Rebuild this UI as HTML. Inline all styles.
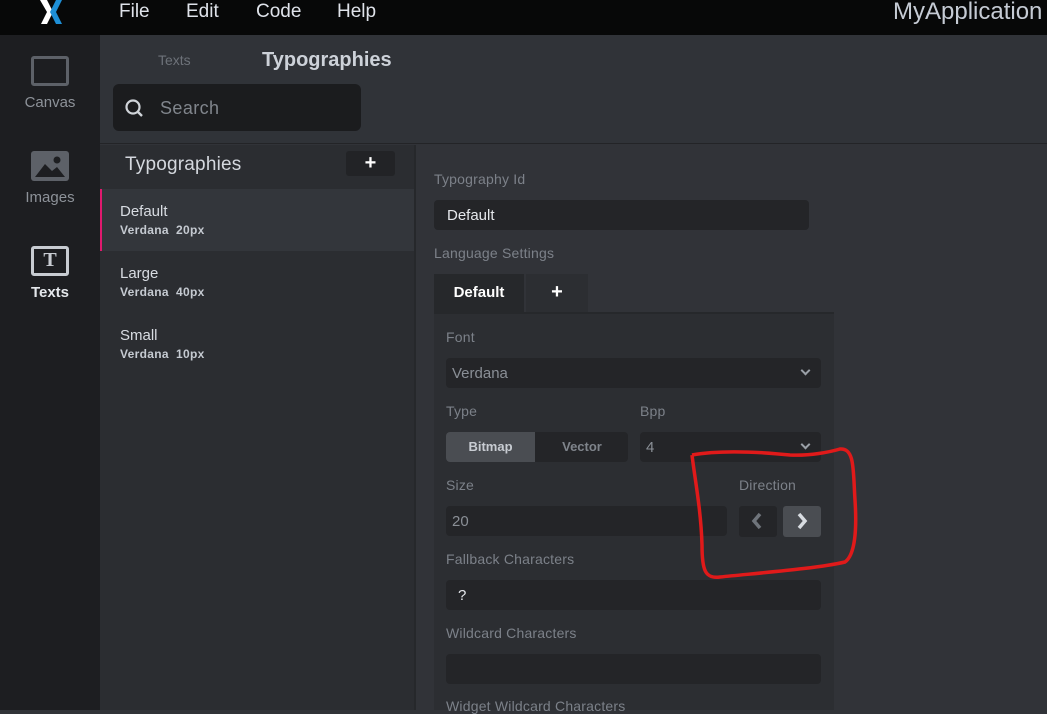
<!DOCTYPE html>
<html><head><meta charset="utf-8"><style>
*{margin:0;padding:0;box-sizing:border-box}
body{width:1047px;height:710px;overflow:hidden;background:#313338;font-family:"Liberation Sans",sans-serif;position:relative;color:#e6e8ec}
.a{position:absolute}
.top{left:0;top:0;width:1047px;height:35px;background:#070808}
.menu{top:1px;font-size:19px;color:#dfe3ea}
.side{left:0;top:35px;width:100px;height:675px;background:#1d1e21}
.slab{width:100px;text-align:center;font-size:15px;color:#8d9299}
.lbl{font-size:14px;color:#7c8189;letter-spacing:.2px}
.inp{background:#242528;border-radius:4px;font-size:15px;color:#8a8f96;padding-left:6px;line-height:31px;height:30px}
.chev{position:absolute;right:12px;top:9px;width:7px;height:7px;border-right:2px solid #9aa0a7;border-bottom:2px solid #9aa0a7;transform:rotate(45deg)}
.sub{font-size:12px;font-weight:bold;color:#c5cad1;letter-spacing:.3px}
</style></head><body>
<div class="a top"></div>
<svg class="a" style="left:40px;top:0" width="24" height="24" viewBox="0 0 24 24"><path d="M0 0 L7 0 L13 12 L7 24 L1 24 L7 12Z" fill="#fff"/><path d="M22 0 L16 0 L10 12 L16 24 L22 24 L16 12Z" fill="#1e8fd6"/></svg>
<div class="a menu" style="left:119px">File</div>
<div class="a menu" style="left:186px">Edit</div>
<div class="a menu" style="left:256px">Code</div>
<div class="a menu" style="left:337px">Help</div>
<div class="a" style="left:893px;top:-2px;font-size:24px;color:#c5cbd4;white-space:nowrap">MyApplication</div>
<div class="a side"></div>
<div class="a" style="left:31px;top:56px;width:38px;height:30px;border:3px solid #5d6168;border-radius:3px"></div>
<div class="a slab" style="top:94px">Canvas</div>
<svg class="a" style="left:31px;top:151px" width="38" height="30"><rect width="38" height="30" rx="3" fill="#5d6168"/><path d="M4 26 L14 13 L21 20 L26 16 L34 26Z" fill="#1d1e21"/><circle cx="26" cy="9" r="3.5" fill="#1d1e21"/></svg>
<div class="a slab" style="top:189px">Images</div>
<div class="a" style="left:31px;top:246px;width:38px;height:30px;border:3px solid #c8ccd2;border-radius:3px;text-align:center;font:bold 20px 'Liberation Serif',serif;color:#c8ccd2;line-height:23px">T</div>
<div class="a slab" style="top:284px;color:#e4e7eb;font-weight:bold">Texts</div>
<div class="a" style="left:100px;top:35px;width:947px;height:109px;background:#303338;border-bottom:1px solid #232427"></div>
<div class="a" style="left:158px;top:52px;font-size:14px;color:#6d7279">Texts</div>
<div class="a" style="left:262px;top:49px;font-size:20px;font-weight:bold;color:#cdd2d9">Typographies</div>
<div class="a" style="left:113px;top:84px;width:248px;height:47px;background:#1b1c1e;border-radius:6px"></div>
<svg class="a" style="left:124px;top:98px" width="22" height="22"><circle cx="9" cy="9" r="6.5" stroke="#d0d4d9" stroke-width="2.2" fill="none"/><path d="M13.5 13.5 L18 18" stroke="#d0d4d9" stroke-width="2.4"/></svg>
<div class="a" style="left:160px;top:98px;font-size:18px;color:#80858c;letter-spacing:.4px">Search</div>
<div class="a" style="left:100px;top:145px;width:314px;height:565px;background:#2b2d31"></div>
<div class="a" style="left:125px;top:154px;font-size:19px;color:#d4d8de;letter-spacing:.2px">Typographies</div>
<div class="a" style="left:346px;top:151px;width:49px;height:25px;background:#222326;border-radius:3px;text-align:center;font:bold 20px 'Liberation Sans';color:#fff;line-height:24px">+</div>
<div class="a" style="left:100px;top:189px;width:314px;height:62px;background:#33363b;border-left:2px solid #e0196e"></div>
<div class="a" style="left:120px;top:203px;font-size:15px;color:#d8dce2">Default</div>
<div class="a sub" style="left:120px;top:223px">Verdana&nbsp; 20px</div>
<div class="a" style="left:120px;top:265px;font-size:15px;color:#d8dce2">Large</div>
<div class="a sub" style="left:120px;top:285px">Verdana&nbsp; 40px</div>
<div class="a" style="left:120px;top:327px;font-size:15px;color:#d8dce2">Small</div>
<div class="a sub" style="left:120px;top:347px">Verdana&nbsp; 10px</div>
<div class="a" style="left:414px;top:145px;width:2px;height:565px;background:#26282b"></div>
<div class="a lbl" style="left:434px;top:171px">Typography Id</div>
<div class="a inp" style="left:434px;top:200px;width:375px;color:#e5e8ec;padding-left:13px">Default</div>
<div class="a lbl" style="left:434px;top:245px">Language Settings</div>
<div class="a" style="left:434px;top:274px;width:90px;height:38px;background:#26282b;font-size:15px;font-weight:bold;color:#fff;text-align:center;line-height:38px">Default</div>
<div class="a" style="left:526px;top:274px;width:62px;height:38px;background:#2c2e32;font:bold 20px 'Liberation Sans';color:#fff;text-align:center;line-height:37px">+</div>
<div class="a" style="left:434px;top:312px;width:400px;height:398px;background:#2c2e32;border-top:2px solid #26282b"></div>
<div class="a lbl" style="left:446px;top:329px">Font</div>
<div class="a inp" style="left:446px;top:358px;width:375px">Verdana<span class="chev"></span></div>
<div class="a lbl" style="left:446px;top:403px">Type</div>
<div class="a lbl" style="left:640px;top:403px">Bpp</div>
<div class="a" style="left:446px;top:432px;width:182px;height:30px;background:#242528;border-radius:4px"></div>
<div class="a" style="left:446px;top:432px;width:89px;height:30px;background:#4a4d52;border-radius:4px 0 0 4px;font-size:13px;font-weight:bold;color:#c8ccd2;text-align:center;line-height:30px">Bitmap</div>
<div class="a" style="left:537px;top:432px;width:90px;height:30px;font-size:13px;font-weight:bold;color:#7f848b;text-align:center;line-height:30px">Vector</div>
<div class="a inp" style="left:640px;top:432px;width:181px">4<span class="chev"></span></div>
<div class="a lbl" style="left:446px;top:477px">Size</div>
<div class="a lbl" style="left:739px;top:477px">Direction</div>
<div class="a inp" style="left:446px;top:506px;width:281px">20</div>
<div class="a" style="left:739px;top:506px;width:38px;height:31px;background:#242528;border-radius:3px"></div>
<svg class="a" style="left:749px;top:511px" width="16" height="20"><path d="M11 3 L5 10 L11 17" stroke="#6f747b" stroke-width="3.5" fill="none"/></svg>
<div class="a" style="left:783px;top:506px;width:38px;height:31px;background:#4a4d52;border-radius:3px"></div>
<svg class="a" style="left:794px;top:511px" width="16" height="20"><path d="M5 3 L11 10 L5 17" stroke="#d8dce1" stroke-width="3.5" fill="none"/></svg>
<div class="a lbl" style="left:446px;top:551px">Fallback Characters</div>
<div class="a inp" style="left:446px;top:580px;width:375px;color:#e5e8ec;padding-left:12px">?</div>
<div class="a lbl" style="left:446px;top:625px">Wildcard Characters</div>
<div class="a inp" style="left:446px;top:654px;width:375px"></div>
<div class="a lbl" style="left:446px;top:698px">Widget Wildcard Characters</div>
<svg class="a" style="left:0;top:0" width="1047" height="710"><path d="M692 455 C720 450,760 452,790 455 C810 456,830 452,840 449 C855 448,853 470,855 500 C857 530,855 555,845 562 C820 568,770 572,720 577 C705 579,702 570,702 545 C701 510,695 480,692 455" stroke="#e01a1a" stroke-width="3.5" fill="none"/></svg>
</body></html>
